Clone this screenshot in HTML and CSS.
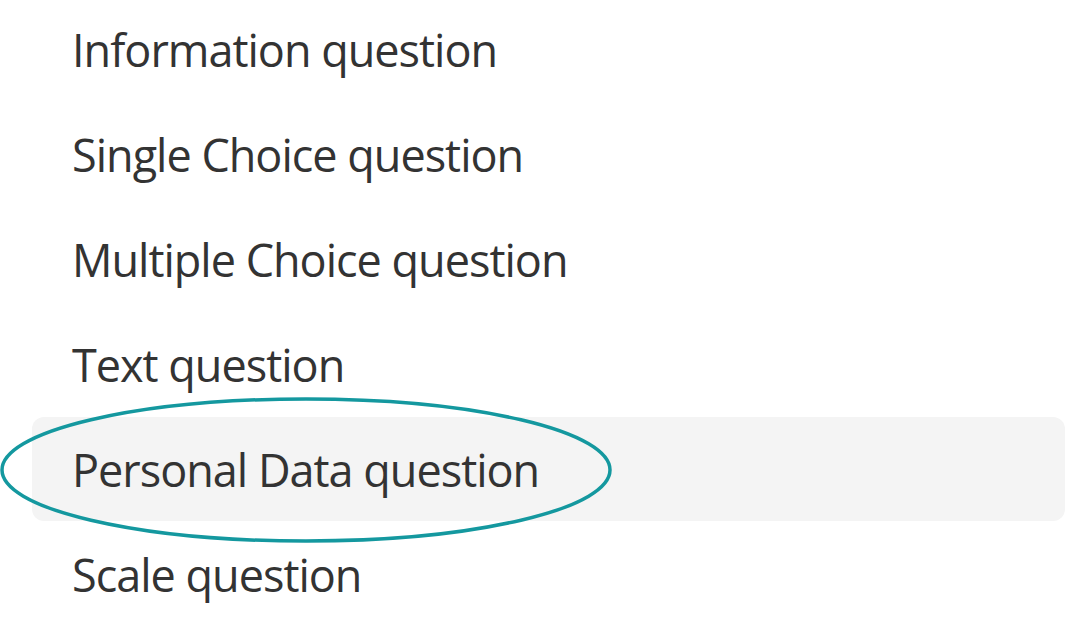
FILE: index.html
```html
<!DOCTYPE html>
<html lang="en">
<head>
<meta charset="utf-8">
<title>Question types</title>
<link rel="stylesheet" href="styles.css">
</head>
<body>
<ul class="menu">
  <li class="menu-item">Information question</li>
  <li class="menu-item">Single Choice question</li>
  <li class="menu-item">Multiple Choice question</li>
  <li class="menu-item">Text question</li>
  <li class="menu-item is-hovered">Personal Data question
    <svg class="callout" width="614" height="150" viewBox="0 0 614 150" aria-hidden="true">
      <ellipse cx="306" cy="74" rx="304" ry="71" fill="none" stroke="#14989f" stroke-width="3.5"/>
    </svg>
  </li>
  <li class="menu-item">Scale question</li>
</ul>
</body>
</html>
```
FILE: styles.css
```css
html, body {
  margin: 0;
  padding: 0;
  background: #ffffff;
}

body {
  width: 1074px;
  height: 642px;
  overflow: hidden;
  font-family: "Open Sans", "Noto Sans", sans-serif;
  color: #333333;
}

.menu {
  list-style: none;
  margin: -3px 9px 0 32px;
  padding: 0;
  display: flex;
  flex-direction: column;
  gap: 1px;
}

.menu-item {
  position: relative;
  height: 104px;
  display: flex;
  align-items: center;
  padding-left: 40px;
  font-size: 45px;
  font-weight: 380;
  letter-spacing: -1px;
  border-radius: 12px;
}

.menu-item.is-hovered {
  background: #f4f4f4;
}

.callout {
  position: absolute;
  left: -32px;
  top: -21px;
  pointer-events: none;
}
```
